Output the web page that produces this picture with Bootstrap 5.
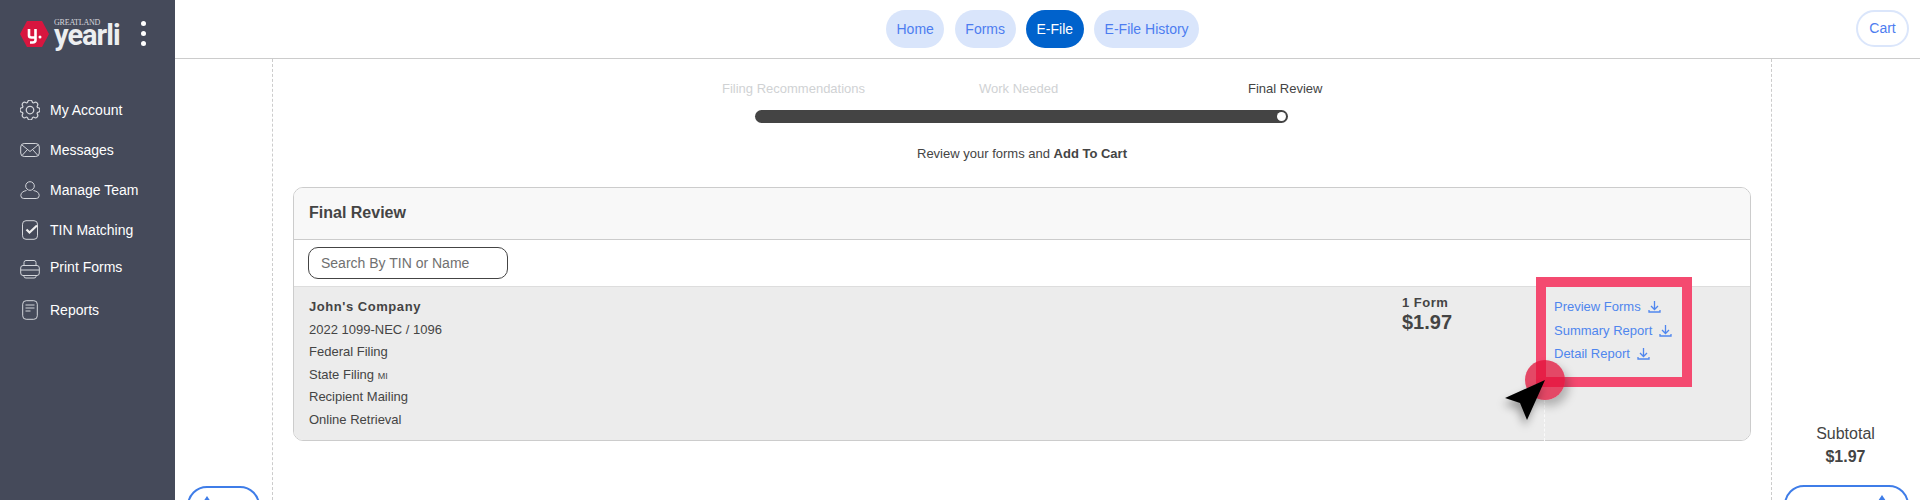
<!DOCTYPE html>
<html lang="en"><head><meta charset="utf-8"><title>Final Review</title>
<link href="https://cdn.jsdelivr.net/npm/bootstrap@5.3.0/dist/css/bootstrap.min.css" rel="stylesheet">
<style>
html,body{height:500px;overflow:hidden}
body{font-family:"Liberation Sans",Arial,sans-serif;color:#444;font-size:13px;background:#fff}
.shell{height:500px;position:relative}
.side{width:175px;background:#454a5a;color:#fff;flex:none}
.brand{height:58px;padding:21px 0 0 20px}
.wordmark{margin-left:5px;width:66px;position:relative;height:27px}
.wordmark small{display:block;font:8px/6px "Liberation Serif",serif;color:#d5d6da;letter-spacing:-.2px;width:40px;height:6px;margin-top:-1px}
.wordmark b{display:block;font:700 29px/21px Roboto,sans-serif;letter-spacing:-1px;color:#eceef0;margin-top:-1px}
.dots{margin-left:21px;margin-top:0;gap:5px;width:6px}
.dots i{display:block;width:5px;height:5px;border-radius:50%;background:#fff}
.menu{padding:42px 0 0 20px;list-style:none;margin:0}
.menu li{height:20px;display:flex;align-items:center;gap:10px;font-size:14px;margin-bottom:20px;white-space:nowrap}
.menu li svg{flex:none;width:20px;height:20px;fill:none;stroke:#d3d5da;stroke-width:1}
.menu .m4{margin-bottom:18px}
.menu .m5{margin-bottom:22px}
.menu .m5 span{margin-top:-1px}
.menu .m5 svg{margin-top:2px}
.main{min-width:0}
.topbar{height:59px;border-bottom:1px solid #ccc;padding:10px 11px 0 0;position:relative;flex:none}
.tabs{gap:10.500px;margin-left:711px}
.tab{height:38px;padding:0 10.500px;display:flex;align-items:center;border-radius:19px;background:#d9e5fb;color:#4d7df0;font-size:14px;text-decoration:none}
.tab.on{background:#0062cc;color:#fff}
.cartbtn{height:37px;width:53px;display:flex;align-items:center;justify-content:center;border:2px solid #dbe6fb;border-radius:19px;color:#4d7df0;font-size:14px;text-decoration:none}
.gutter-l{width:97px;flex:none;padding:427px 0 0 12px}
.gutter-r{width:149px;flex:none;padding:365px 0 0 12px;text-align:center}
.centre{width:1500px;flex:none;border-left:1px dashed #ccc;border-right:1px dashed #ccc;padding:0 20px}
.outline{height:40px;border:2px solid #3f7de8;border-radius:20px;background:#fff;position:relative;display:block}
.outline svg{position:absolute;top:8px;width:8px;height:6px;fill:#3f7de8}
.gutter-l .outline{width:73px}.gutter-l svg{left:14px}
.gutter-r .outline{width:125px;margin-top:18px}.gutter-r svg{left:92px}
.subt{font-size:16px;line-height:20px;margin-right:14px}
.subv{font-size:16px;font-weight:700;line-height:20px;margin-top:3px;margin-right:14px}
.steps{padding-top:7px;height:69px;position:relative}
.steps span{position:absolute;top:20px;font-size:13px;color:#d0d2d4;white-space:nowrap}
.steps .now{color:#444}
.track{width:533px;height:13px;background:#444;border-radius:7px;margin:44px 0 0 462px;position:relative}
.track::after{content:"";position:absolute;right:2px;top:2px;width:9px;height:9px;border-radius:50%;background:#fff}
.hint{text-align:center;margin:16px 0 0 0;line-height:20px;font-size:13px;height:43px}
.hint b{font-weight:700}
.panel{--bs-card-border-color:#ccc;--bs-card-border-radius:10px;--bs-card-inner-border-radius:9px;--bs-card-cap-bg:#f8f8f8;--bs-border-color:#ccc;height:254px;width:1458px}
.panel .card-header{flex:none;height:52px;padding:0 15px 2px;display:flex;align-items:center;font-size:16px;font-weight:700;border-bottom-color:#ccc}
.findrow{flex:none;height:47px;padding:7px 14px;border-bottom:1px solid #ddd}
.find.form-control{width:200px;height:32px;border:1px solid #444;border-radius:10px;padding:0 12px;font-size:14px;color:#555}
.find::placeholder{color:#707070;opacity:1}
.rowbody{flex:1;min-height:0;background:#ececec;padding:7px 15px 0;border-radius:0 0 9px 9px}
.info{line-height:22.600px;width:1093px;flex:none;padding-top:2px}
.info b{letter-spacing:.55px}
.info small{font-size:9px;line-height:1}
.count{width:153px;flex:none;padding-top:1px}
.count b{display:block;letter-spacing:.5px;line-height:16px}
.count strong{display:block;font-size:20px;line-height:22px}
.links{padding-top:1px;gap:0;margin-left:-1px}
.links a{display:flex;align-items:center;gap:7px;font-size:13px;color:#4f86ee;text-decoration:none;line-height:23.600px;white-space:nowrap}
.links svg{width:13px;height:13px;fill:none;stroke:#4f86ee;stroke-width:1.300}
.callout{position:absolute;left:1536px;top:277px;width:156px;height:110px;border:10px solid #f44a70;pointer-events:none}
.spot{position:absolute;left:1525px;top:360px;width:40px;height:40px;border-radius:50%;background:rgba(226,18,58,.75);box-shadow:4px 6px 10px rgba(0,0,0,.25)}
.stem{position:absolute;left:1544px;top:400px;height:41px;border-left:1px dashed #fafafa}
.pointer{position:absolute;left:1500px;top:375px;width:50px;height:50px;filter:drop-shadow(-2px 6px 4px rgba(0,0,0,.35))}
</style></head><body>
<div class="shell d-flex">
  <aside class="side">
    <div class="brand d-flex">
      <svg width="29" height="26" viewBox="0 0 29 26"><polygon points="0,13 7,0 22,0 29,13 22,26 7,26" fill="#d8163f"/><path d="M9 8v6.500q0 2 2.500 2H15M15.500 8v11q0 2.500-3 2.500H10" fill="none" stroke="#fff" stroke-width="2.600"/><circle cx="20" cy="16" r="1.500" fill="#fff"/></svg>
      <div class="wordmark"><small>GREATLAND</small><b>yearli</b></div>
      <div class="dots d-flex flex-column"><i></i><i></i><i></i></div>
    </div>
    <ul class="menu">
      <li><svg viewBox="0 0 16 16"><circle cx="8" cy="8" r="3"/><path d="M9.796 1.343c-.527-1.790-3.065-1.790-3.592 0l-.094.319a.873.873 0 0 1-1.255.52l-.292-.16c-1.640-.892-3.433.902-2.540 2.541l.159.292a.873.873 0 0 1-.52 1.255l-.319.094c-1.790.527-1.790 3.065 0 3.592l.319.094a.873.873 0 0 1 .52 1.255l-.16.292c-.892 1.640.901 3.434 2.541 2.540l.292-.159a.873.873 0 0 1 1.255.52l.094.319c.527 1.790 3.065 1.790 3.592 0l.094-.319a.873.873 0 0 1 1.255-.52l.292.16c1.640.893 3.434-.902 2.540-2.541l-.159-.292a.873.873 0 0 1 .52-1.255l.319-.094c1.790-.527 1.790-3.065 0-3.592l-.319-.094a.873.873 0 0 1-.52-1.255l.16-.292c.893-1.640-.902-3.433-2.541-2.540l-.292.159a.873.873 0 0 1-1.255-.52z"/></svg><span>My Account</span></li>
      <li><svg viewBox="0 0 20 20"><rect x=".7" y="3.500" width="18.600" height="13" rx="3.500"/><path d="M2 5l8 6.500L18 5M2 15.500l5.500-6M18 15.500l-5.500-6"/></svg><span>Messages</span></li>
      <li><svg viewBox="0 0 20 20"><circle cx="10" cy="6" r="4.300"/><path d="M6.500 10.500Q1 11.500 .8 15.500q0 3 3 3h12.400q3 0 3-3-.2-4-5.700-5"/></svg><span>Manage Team</span></li>
      <li class="m4"><svg viewBox="0 0 20 20"><rect x="2.500" y=".7" width="15" height="18.600" rx="3.500"/><path d="M6.500 9.500l3 3L17 5.500" stroke-width="2.200" stroke="#eee"/></svg><span>TIN Matching</span></li>
      <li class="m5"><svg viewBox="0 0 20 20"><path d="M4 6V3.500q0-2 2-2h8q2 0 2 2V6M3 6.500h14q2.300 0 2.300 2.500v5q0 2.500-2.300 2.500H3Q.7 16.500.7 14V9Q.7 6.500 3 6.500zM.7 11h18.600M4 16.500v1q0 1.500 2 1.500h8q2 0 2-1.500v-1"/></svg><span>Print Forms</span></li>
      <li><svg viewBox="0 0 20 20"><rect x="2.700" y=".7" width="14.600" height="18.600" rx="3.500"/><path d="M5.500 5h9M5.500 8h9M5.500 11h5"/></svg><span>Reports</span></li>
    </ul>
  </aside>
  <div class="main flex-grow-1 d-flex flex-column">
    <header class="topbar d-flex justify-content-between">
      <nav class="tabs d-flex">
        <a class="tab" href="#">Home</a><a class="tab" href="#">Forms</a><a class="tab on" href="#">E-File</a><a class="tab" href="#">E-File History</a>
      </nav>
      <a class="cartbtn" href="#">Cart</a>
    </header>
    <div class="d-flex flex-grow-1 overflow-hidden">
      <div class="gutter-l"><span class="outline"><svg viewBox="0 0 8 6"><polygon points="4,0 8,6 0,6"/></svg></span></div>
      <main class="centre">
        <div class="steps">
          <span style="left:429px">Filing Recommendations</span><span style="left:686px">Work Needed</span><span class="now" style="left:955px">Final Review</span>
          <div class="track"></div>
        </div>
        <p class="hint">Review your forms and <b>Add To Cart</b></p>
        <section class="card panel">
          <div class="card-header">Final Review</div>
          <div class="findrow"><input class="form-control find" placeholder="Search By TIN or Name"></div>
          <div class="rowbody d-flex">
            <div class="info"><b>John's Company</b><br>2022 1099-NEC / 1096<br>Federal Filing<br>State Filing <small>MI</small><br>Recipient Mailing<br>Online Retrieval</div>
            <div class="count"><b>1 Form</b><strong>$1.97</strong></div>
            <div class="links d-flex flex-column">
              <a href="#">Preview Forms <svg viewBox="0 0 13 13"><path d="M6.500 1v8M3 6l3.500 3.500L10 6M1 10v2h11v-2"/></svg></a>
              <a href="#">Summary Report <svg viewBox="0 0 13 13"><path d="M6.500 1v8M3 6l3.500 3.500L10 6M1 10v2h11v-2"/></svg></a>
              <a href="#">Detail Report <svg viewBox="0 0 13 13"><path d="M6.500 1v8M3 6l3.500 3.500L10 6M1 10v2h11v-2"/></svg></a>
            </div>
          </div>
        </section>
      </main>
      <div class="gutter-r"><div class="subt">Subtotal</div><div class="subv">$1.97</div><span class="outline"><svg viewBox="0 0 8 6"><polygon points="4,0 8,6 0,6"/></svg></span></div>
    </div>
  </div>
  <div class="stem"></div>
  <div class="callout"></div>
  <div class="spot"></div>
  <svg class="pointer" viewBox="0 0 50 50"><polygon points="45,5 5,23 20,28 27,45" fill="#000"/></svg>
</div>
<script src="https://cdn.jsdelivr.net/npm/bootstrap@5.3.0/dist/js/bootstrap.bundle.min.js"></script>
</body></html>
